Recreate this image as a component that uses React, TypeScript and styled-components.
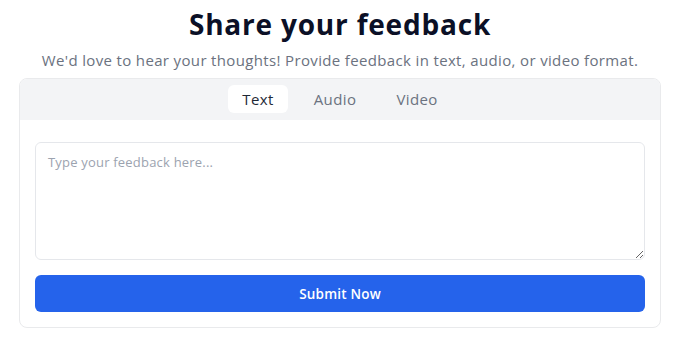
import React, { useState } from "react";
import styled, { createGlobalStyle } from "styled-components";

const GlobalStyle = createGlobalStyle`
  body {
    margin: 0;
    background: #ffffff;
    font-family: "Open Sans", "Liberation Sans", sans-serif;
  }
`;

const Page = styled.div`
  display: flex;
  flex-direction: column;
  align-items: center;
  padding-top: 6px;
`;

const Title = styled.h1`
  margin: 0;
  font-size: 28px;
  font-weight: 700;
  color: #0b1026;
  line-height: 36px;
  letter-spacing: 0.8px;
`;

const Subtitle = styled.p`
  margin: 8px 0 0;
  font-size: 15px;
  color: #6b7280;
  line-height: 20px;
  letter-spacing: 0.35px;
`;

const Card = styled.div`
  width: 642px;
  margin-top: 8px;
  border: 1px solid #e9eaec;
  border-radius: 8px;
  box-sizing: border-box;
  overflow: hidden;
`;

const TabBar = styled.div`
  display: flex;
  justify-content: center;
  gap: 12px;
  background: #f3f4f6;
  padding: 6px 0 7px;
`;

const Tab = styled.button<{ $active: boolean }>`
  border: none;
  background: ${(p) => (p.$active ? "#ffffff" : "transparent")};
  color: ${(p) => (p.$active ? "#1f2937" : "#6b7280")};
  font-family: inherit;
  font-size: 15px;
  letter-spacing: 0.4px;
  padding: 5px 14px;
  border-radius: 6px;
  cursor: pointer;
  line-height: 18px;
`;

const Body = styled.div`
  display: flex;
  flex-direction: column;
  gap: 15px;
  padding: 22px 15px 15px;
`;

const TextArea = styled.textarea`
  height: 118px;
  box-sizing: border-box;
  border: 1px solid #e5e7eb;
  border-radius: 6px;
  padding: 10px 12px;
  font-family: inherit;
  font-size: 13px;
  letter-spacing: 0.2px;
  color: #111827;
  resize: vertical;

  &::placeholder {
    color: #9ca3af;
  }
`;

const SubmitButton = styled.button`
  height: 37px;
  border: none;
  border-radius: 6px;
  background: #2563eb;
  color: #ffffff;
  font-family: inherit;
  font-size: 13.5px;
  font-weight: 600;
  letter-spacing: 0.2px;
  cursor: pointer;
`;

const tabs = ["Text", "Audio", "Video"];

export default function App() {
  const [active, setActive] = useState("Text");

  return (
    <>
      <GlobalStyle />
      <Page>
        <Title>Share your feedback</Title>
        <Subtitle>
          We'd love to hear your thoughts! Provide feedback in text, audio, or
          video format.
        </Subtitle>
        <Card>
          <TabBar>
            {tabs.map((t) => (
              <Tab key={t} $active={active === t} onClick={() => setActive(t)}>
                {t}
              </Tab>
            ))}
          </TabBar>
          <Body>
            <TextArea placeholder="Type your feedback here..." />
            <SubmitButton>Submit Now</SubmitButton>
          </Body>
        </Card>
      </Page>
    </>
  );
}
